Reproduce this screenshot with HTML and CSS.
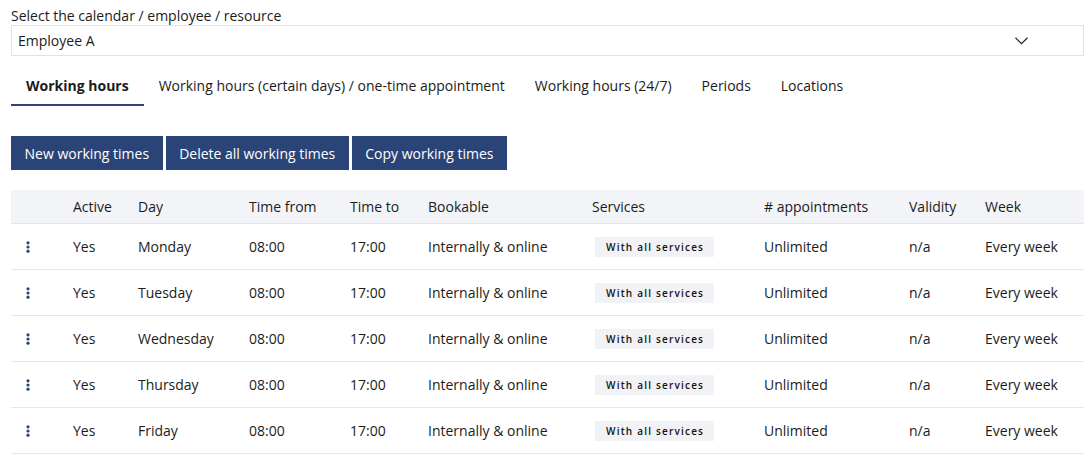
FILE: index.html
```html
<!DOCTYPE html>
<html lang="en">
<head>
    <meta charset="UTF-8">
    <meta name="viewport" content="width=device-width, initial-scale=1.0">
    <title>Working hours</title>
    <link rel="stylesheet" href="styles.css">
</head>
<body>
    <div class="page">
        <label class="field-label">Select the calendar / employee / resource</label>
        <div class="select-box">
            <span>Employee A</span>
            <svg class="chevron" width="13" height="8" viewBox="0 0 13 8"><polyline points="0.5,0.8 6.5,6.6 12.5,0.8" fill="none" stroke="#222" stroke-width="1.2"/></svg>
        </div>

        <div class="tabs">
            <div class="tab active">Working hours</div>
            <div class="tab">Working hours (certain days) / one-time appointment</div>
            <div class="tab">Working hours (24/7)</div>
            <div class="tab">Periods</div>
            <div class="tab">Locations</div>
        </div>

        <div class="actions">
            <button class="btn">New working times</button>
            <button class="btn">Delete all working times</button>
            <button class="btn">Copy working times</button>
        </div>

        <table class="hours-table">
            <colgroup>
                <col style="width:62px">
                <col style="width:65px">
                <col style="width:111px">
                <col style="width:101px">
                <col style="width:78px">
                <col style="width:164px">
                <col style="width:172px">
                <col style="width:145px">
                <col style="width:76px">
                <col>
            </colgroup>
            <thead>
                <tr>
                    <th></th>
                    <th>Active</th>
                    <th>Day</th>
                    <th>Time from</th>
                    <th>Time to</th>
                    <th>Bookable</th>
                    <th>Services</th>
                    <th># appointments</th>
                    <th>Validity</th>
                    <th>Week</th>
                </tr>
            </thead>
            <tbody id="rows"></tbody>
        </table>
    </div>

    <script>
        const days = ['Monday', 'Tuesday', 'Wednesday', 'Thursday', 'Friday'];
        const rows = document.getElementById('rows');

        days.forEach(day => {
            const tr = document.createElement('tr');
            tr.innerHTML = `
                <td class="menu-cell"><svg width="4" height="12" viewBox="0 0 4 12"><circle cx="2" cy="1.8" r="1.6" fill="#2a4478"/><circle cx="2" cy="6" r="1.6" fill="#2a4478"/><circle cx="2" cy="10.2" r="1.6" fill="#2a4478"/></svg></td>
                <td>Yes</td>
                <td>${day}</td>
                <td>08:00</td>
                <td>17:00</td>
                <td>Internally &amp; online</td>
                <td><span class="badge">With all services</span></td>
                <td>Unlimited</td>
                <td>n/a</td>
                <td>Every week</td>`;
            rows.appendChild(tr);
        });
    </script>
</body>
</html>
```

FILE: styles.css
```css
body {
    margin: 0;
    font-family: 'Open Sans', 'Noto Sans', sans-serif;
    font-size: 14px;
    color: #1b1b1b;
    background: #fff;
}

.page {
    padding: 6px 8px 0 11px;
}

.field-label {
    display: block;
    line-height: 19px;
}

.select-box {
    display: flex;
    align-items: center;
    justify-content: space-between;
    height: 29px;
    border: 1px solid #e2e2e2;
    padding: 0 55px 0 6px;
}

.chevron {
    margin-top: 1px;
}

.tabs {
    display: flex;
    margin-top: 12px;
}

.tab {
    padding: 8px 15px 9px;
    line-height: 19px;
    border-bottom: 2px solid transparent;
    cursor: pointer;
}

.tab.active {
    font-weight: 700;
    border-bottom: 2px solid #2a4478;
}

.actions {
    display: flex;
    gap: 3px;
    margin-top: 30px;
}

.btn {
    background-color: #2a4478;
    color: #fff;
    border: none;
    font-family: inherit;
    font-size: 14px;
    height: 34px;
    padding: 0 13.5px;
    cursor: pointer;
}

.hours-table {
    width: 1073px;
    margin-top: 20px;
    border-collapse: collapse;
    table-layout: fixed;
}

.hours-table th {
    background-color: #f3f4f8;
    font-weight: 400;
    text-align: left;
    height: 33px;
    padding: 0;
    border-bottom: 1px solid #e6e6e9;
}

.hours-table td {
    height: 45px;
    padding: 0;
    border-bottom: 1px solid #e6e6e9;
}

.menu-cell {
    padding-left: 15px !important;
}

.menu-cell svg {
    display: block;
}

.badge {
    display: inline-block;
    margin-left: 3px;
    background-color: #f1f2f6;
    font-size: 10px;
    font-weight: 600;
    letter-spacing: 1.2px;
    line-height: 20px;
    padding: 0 10px 0 11px;
    color: #111;
}
```
